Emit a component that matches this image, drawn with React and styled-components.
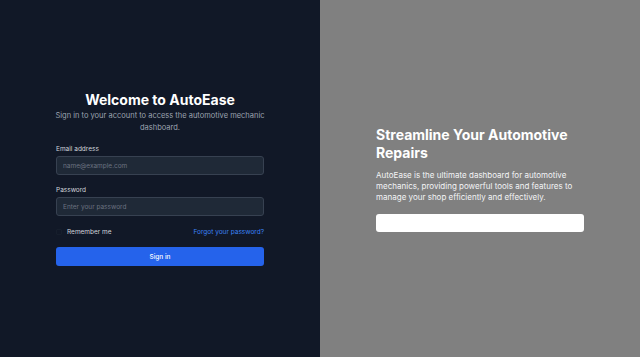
import React from "react";
import styled, { createGlobalStyle } from "styled-components";

const Global = createGlobalStyle`
  html, body { margin: 0; padding: 0; height: 100%; }
  body { font-family: Inter, "Noto Sans", sans-serif; }
  #root { height: 100%; }
  * { box-sizing: border-box; }
`;

const Page = styled.div`
  display: grid;
  grid-template-columns: 1fr 1fr;
  height: 357px;
  width: 640px;
`;

const LeftPane = styled.div`
  background: #111827;
  display: flex;
  align-items: center;
  justify-content: center;
`;

const Form = styled.form`
  width: 208px;
  display: flex;
  flex-direction: column;
`;

const Title = styled.h1`
  margin: 0;
  color: #fff;
  font-size: 14px;
  font-weight: 700;
  text-align: center;
  line-height: 18px;
`;

const Sub = styled.p`
  margin: 1px -4px 0;
  color: #9ca3af;
  font-size: 7.5px;
  line-height: 12px;
  text-align: center;
`;

const Field = styled.div`
  display: flex;
  flex-direction: column;
  margin-top: 10px;
`;

const Label = styled.label`
  color: #d1d5db;
  font-size: 6.5px;
  line-height: 10px;
  margin-bottom: 2px;
`;

const Input = styled.input`
  height: 19px;
  background: #1f2937;
  border: 1px solid #374151;
  border-radius: 3px;
  padding: 0 6px;
  color: #fff;
  font-family: inherit;
  font-size: 6.5px;
  outline: none;
  &::placeholder { color: #6b7280; }
`;

const Row = styled.div`
  display: flex;
  align-items: center;
  justify-content: space-between;
  margin-top: 11px;
  font-size: 6.5px;
  line-height: 10px;
`;

const Remember = styled.label`
  display: flex;
  align-items: center;
  gap: 5px;
  color: #d1d5db;
`;

const Check = styled.span`
  width: 6px;
  height: 6px;
  border-radius: 1px;
  background: #111827;
  border: 1px solid #161e2c;
`;

const Forgot = styled.a`
  color: #3b82f6;
  text-decoration: none;
`;

const Button = styled.button`
  margin-top: 10px;
  height: 19px;
  border: none;
  border-radius: 3px;
  background: #2563eb;
  color: #fff;
  font-family: inherit;
  font-size: 6.5px;
  font-weight: 500;
`;

const RightPane = styled.div`
  background: #808080;
  display: flex;
  align-items: center;
  justify-content: center;
`;

const Promo = styled.div`
  width: 208px;
  display: flex;
  flex-direction: column;
`;

const PromoTitle = styled.h2`
  margin: 0;
  color: #fff;
  font-size: 14px;
  font-weight: 700;
  line-height: 18px;
`;

const PromoText = styled.p`
  margin: 8px 0 0;
  color: #f3f4f6;
  font-size: 8px;
  line-height: 11px;
`;

const WhiteBar = styled.div`
  margin-top: 11px;
  height: 18px;
  background: #fff;
  border-radius: 3px;
`;

export default function App() {
  return (
    <>
      <Global />
      <Page>
        <LeftPane>
          <Form onSubmit={(e) => e.preventDefault()}>
            <Title>Welcome to AutoEase</Title>
            <Sub>Sign in to your account to access the automotive mechanic dashboard.</Sub>
            <Field>
              <Label>Email address</Label>
              <Input placeholder="name@example.com" />
            </Field>
            <Field>
              <Label>Password</Label>
              <Input type="password" placeholder="Enter your password" />
            </Field>
            <Row>
              <Remember>
                <Check />
                Remember me
              </Remember>
              <Forgot href="#">Forgot your password?</Forgot>
            </Row>
            <Button type="submit">Sign in</Button>
          </Form>
        </LeftPane>
        <RightPane>
          <Promo>
            <PromoTitle>Streamline Your Automotive Repairs</PromoTitle>
            <PromoText>
              AutoEase is the ultimate dashboard for automotive mechanics, providing powerful tools and features to manage your shop efficiently and effectively.
            </PromoText>
            <WhiteBar />
          </Promo>
        </RightPane>
      </Page>
    </>
  );
}
